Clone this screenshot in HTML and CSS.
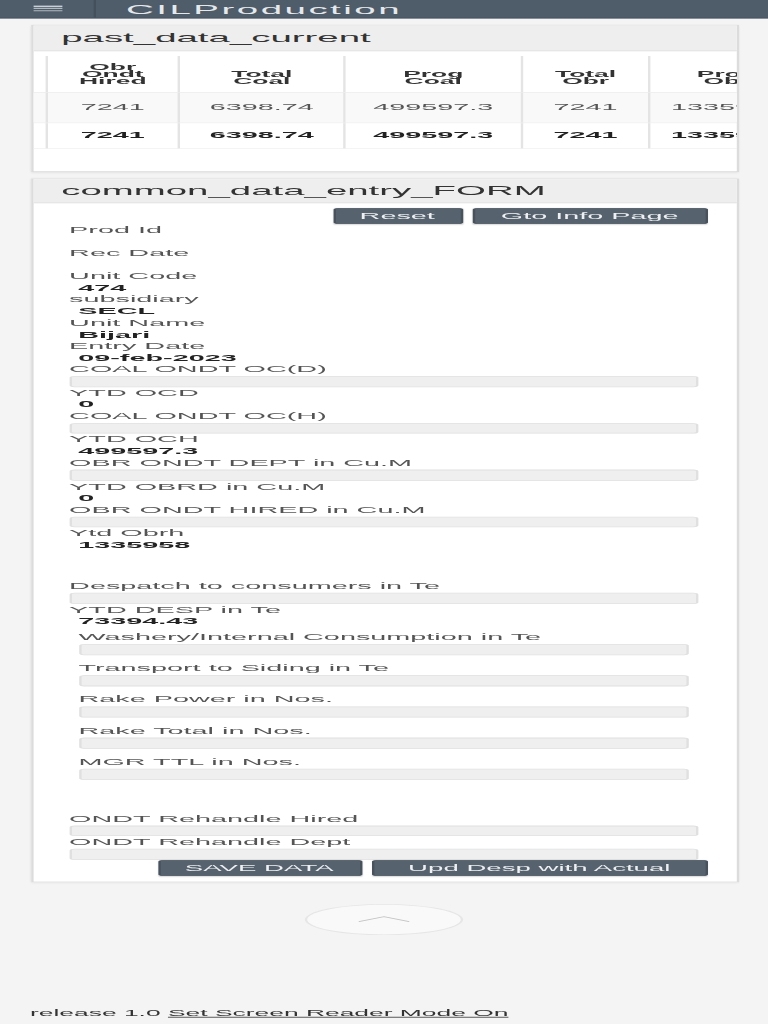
FILE: index.html
```html
<!DOCTYPE html>
<html>
<head>
    <meta charset="UTF-8">
    <meta name="viewport" content="width=device-width, initial-scale=1.0">
    <title>CILProduction</title>
    <link rel="stylesheet" href="styles.css">
</head>
<body>
<div class="page">
    <div class="header">
        <div class="menu-btn">
            <span></span><span></span><span></span>
        </div>
        <h1 class="title">CILProduction</h1>
    </div>

    <div class="panel">
        <div class="panel-head">past_data_current</div>
        <div class="table-wrap">
            <table class="grid">
                <colgroup>
                    <col class="c0"><col class="c1"><col class="c2"><col class="c3"><col class="c4"><col class="c5">
                </colgroup>
                <thead>
                    <tr>
                        <th></th>
                        <th>Obr<br>Ondt<br>Hired</th>
                        <th>Total<br>Coal</th>
                        <th>Prog<br>Coal</th>
                        <th>Total<br>Obr</th>
                        <th>Prog<br>Obr</th>
                    </tr>
                </thead>
                <tbody>
                    <tr class="odd">
                        <td></td>
                        <td>7241</td>
                        <td>6398.74</td>
                        <td>499597.3</td>
                        <td>7241</td>
                        <td>1335958</td>
                    </tr>
                    <tr class="total">
                        <td></td>
                        <td>7241</td>
                        <td>6398.74</td>
                        <td>499597.3</td>
                        <td>7241</td>
                        <td>1335958</td>
                    </tr>
                </tbody>
            </table>
        </div>
    </div>

    <div class="panel form-panel">
        <div class="panel-head head-form">common_data_entry_FORM</div>
        <div class="form-body">
            <div class="btn-row top-btns">
                <button class="btn btn-reset">Reset</button>
                <button class="btn btn-info">Gto Info Page</button>
            </div>

            <div class="lbl">Prod Id</div>
            <div class="val"></div>
            <div class="lbl">Rec Date</div>
            <div class="val"></div>
            <div class="lbl">Unit Code</div>
            <div class="val">474</div>
            <div class="lbl">subsidiary</div>
            <div class="val">SECL</div>
            <div class="lbl">Unit Name</div>
            <div class="val">Bijari</div>
            <div class="lbl">Entry Date</div>
            <div class="val">09-feb-2023</div>

            <div class="lbl">COAL ONDT OC(D)</div>
            <input class="inp" type="text">
            <div class="lbl">YTD OCD</div>
            <div class="val">0</div>
            <div class="lbl">COAL ONDT OC(H)</div>
            <input class="inp" type="text">
            <div class="lbl">YTD OCH</div>
            <div class="val">499597.3</div>
            <div class="lbl">OBR ONDT DEPT in Cu.M</div>
            <input class="inp" type="text">
            <div class="lbl">YTD OBRD in Cu.M</div>
            <div class="val">0</div>
            <div class="lbl">OBR ONDT HIRED in Cu.M</div>
            <input class="inp" type="text">
            <div class="lbl">Ytd Obrh</div>
            <div class="val">1335958</div>

            <div class="lbl desp">Despatch to consumers in Te</div>
            <input class="inp" type="text">
            <div class="lbl">YTD DESP in Te</div>
            <div class="val">73394.43</div>

            <div class="sub-block">
                <div class="sub-field">
                    <div class="lbl">Washery/Internal Consumption in Te</div>
                    <input class="inp" type="text">
                </div>
                <div class="sub-field">
                    <div class="lbl">Transport to Siding in Te</div>
                    <input class="inp" type="text">
                </div>
                <div class="sub-field">
                    <div class="lbl">Rake Power in Nos.</div>
                    <input class="inp" type="text">
                </div>
                <div class="sub-field">
                    <div class="lbl">Rake Total in Nos.</div>
                    <input class="inp" type="text">
                </div>
                <div class="sub-field">
                    <div class="lbl">MGR TTL in Nos.</div>
                    <input class="inp" type="text">
                </div>
            </div>

            <div class="lbl rehandle">ONDT Rehandle Hired</div>
            <input class="inp" type="text">
            <div class="lbl">ONDT Rehandle Dept</div>
            <input class="inp" type="text">

            <div class="btn-row bottom-btns">
                <button class="btn btn-save">SAVE DATA</button>
                <button class="btn btn-upd">Upd Desp with Actual</button>
            </div>
        </div>
    </div>

    <div class="top-link">
        <svg width="22" height="8" viewBox="0 0 22 8">
            <polyline points="0.5,7 11,0.8 21.5,7" fill="none" stroke="#c4c4c4" stroke-width="0.8"/>
        </svg>
    </div>

    <div class="footer">release 1.0 <a href="#" class="reader-link">Set Screen Reader Mode On</a></div>
</div>
</body>
</html>
```

FILE: styles.css
```css
* {
    box-sizing: border-box;
}

html, body {
    margin: 0;
    padding: 0;
    width: 768px;
    height: 1024px;
    overflow: hidden;
    background: #f4f4f4;
}

.page {
    width: 320px;
    height: 1280px;
    transform: scale(2.4, 0.8);
    transform-origin: 0 0;
    font-family: "Liberation Sans", Arial, sans-serif;
    color: #333;
    display: flex;
    flex-direction: column;
}

.header {
    height: 22.5px;
    background: #4f5c6a;
    display: flex;
    align-items: center;
    border-bottom: 1px solid #46525f;
}

.menu-btn {
    width: 40px;
    height: 100%;
    border-right: 1px solid #44505c;
    display: flex;
    flex-direction: column;
    justify-content: center;
    gap: 1.2px;
    padding-left: 13.8px;
}

.menu-btn span {
    display: block;
    width: 12px;
    height: 1.4px;
    background: #c9d0d6;
}

.title {
    margin: 1px 0 0 12.5px;
    font-size: 16px;
    font-weight: normal;
    color: #e6e9ec;
    line-height: 23px;
    letter-spacing: 1.05px;
}

.panel {
    margin: 8.5px 12.5px 0;
    background: #fff;
    border: 1px solid #dcdcdc;
    box-shadow: 0 1px 2px rgba(0,0,0,0.12);
    height: 184px;
}

.panel-head {
    height: 31.5px;
    line-height: 30px;
    padding-left: 12px;
    background: #eeeeee;
    border-bottom: 1px solid #e2e2e2;
    font-size: 16px;
    color: #333;
}

.table-wrap {
    margin-top: 6.5px;
    overflow: hidden;
}

.grid {
    border-collapse: collapse;
    table-layout: fixed;
    width: 376px;
    margin-left: -54.7px;
    font-size: 12px;
}

.c0 { width: 60px; }
.c1 { width: 55.4px; }
.c2 { width: 68.8px; }
.c3 { width: 74px; }
.c4 { width: 53px; }
.c5 { width: 64.8px; }

.grid th,
.grid td {
    border-left: 1px solid #e4e4e4;
    border-right: 1px solid #e4e4e4;
    text-align: center;
    white-space: nowrap;
    overflow: hidden;
}

.grid th {
    height: 45px;
    vertical-align: bottom;
    padding: 0 2px 9px;
    font-size: 11px;
    line-height: 8.8px;
    font-weight: bold;
    color: #333;
    border-bottom: 1px solid #ededed;
}

.grid td {
    color: #555;
    border-bottom: 1px solid #ededed;
}

.grid .odd td {
    height: 38.5px;
    background: #f9f9f9;
}

.grid .total td {
    height: 31.5px;
    font-weight: bold;
    color: #222;
}

.form-panel {
    margin-top: 7.5px;
    height: 880px;
}

.head-form {
    height: 30px;
    line-height: 29px;
}

.form-body {
    padding: 0 15.7px 9.5px 15.3px;
    font-size: 12px;
}

.btn-row {
    display: flex;
    justify-content: flex-end;
    gap: 4.2px;
    margin-right: -3.9px;
}

.top-btns {
    margin-top: 6.5px;
}

.btn {
    height: 20px;
    padding: 0;
    background: #56636f;
    border: 1px solid #47525d;
    border-radius: 2px;
    color: #eef0f2;
    font-family: "Liberation Sans", Arial, sans-serif;
    font-size: 12px;
    line-height: 18px;
    box-shadow: 0 1px 1px rgba(0,0,0,0.15);
}

.btn-reset { width: 54px; }
.btn-info { width: 98px; }
.btn-save { width: 85px; font-size: 11.5px; }
.btn-upd { width: 140px; font-size: 11.5px; }

.lbl {
    line-height: 14.5px;
    height: 14.5px;
    color: #555;
    white-space: nowrap;
}

.val {
    line-height: 14.5px;
    height: 14.5px;
    padding-left: 3.8px;
    font-weight: bold;
    color: #222;
}

.inp {
    display: block;
    width: 100%;
    height: 13.5px;
    margin: 1.5px 0 0;
    padding: 0;
    background: #efefef;
    border: 1px solid #e0e0e0;
    border-radius: 2px;
}

.desp {
    margin-top: 37px;
}

.sub-block {
    margin: 5.5px 4.3px 0 3.9px;
}

.sub-field + .sub-field {
    margin-top: 9.5px;
}

.rehandle {
    margin-top: 41px;
}

.top-link {
    align-self: center;
    margin-top: 27.5px;
    width: 66px;
    height: 39px;
    border: 1px solid #e6e6e6;
    border-radius: 50%;
    background: #f9f9f9;
    display: flex;
    align-items: center;
    justify-content: center;
}

.top-link svg {
    margin-top: -2px;
}

.footer {
    margin-top: auto;
    margin-bottom: 7px;
    padding-left: 12.5px;
    font-size: 11px;
    line-height: 14px;
    color: #333;
}

.reader-link {
    color: #333;
    text-decoration: underline;
}
```
